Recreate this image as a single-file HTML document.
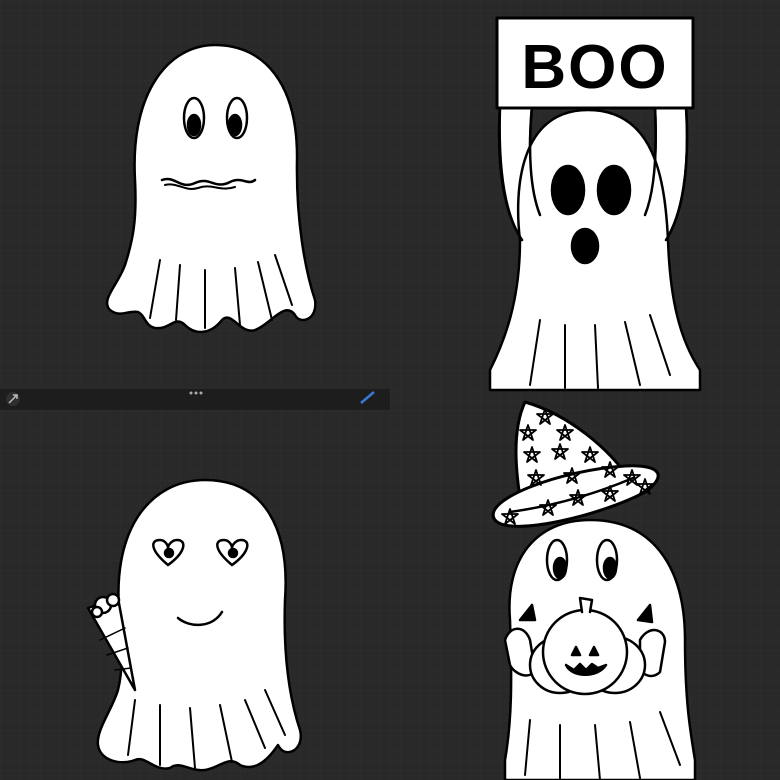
<!DOCTYPE html>
<html><head><meta charset="utf-8"><style>
html,body{margin:0;padding:0;background:#2a2a2a;}
svg{display:block}
</style></head><body>
<svg width="780" height="780" viewBox="0 0 780 780" xmlns="http://www.w3.org/2000/svg">
<defs>
<pattern id="g" width="10" height="10" patternUnits="userSpaceOnUse">
<path d="M10 0H0V10" fill="none" stroke="#303030" stroke-width="1"/>
</pattern>
<path id="s" d="M0 -8 L5 7 L-8 -3 L8 -3 L-5 7 Z"/>
</defs>
<rect width="780" height="780" fill="#292929"/>
<rect width="780" height="780" fill="url(#g)"/>

<!-- toolbar -->
<rect x="0" y="389" width="390" height="21" fill="#1d1d1d"/>
<circle cx="13" cy="399" r="7" fill="#2e2e2e"/>
<path d="M9 403 L17 395 M13 395 H17 V399" stroke="#bbb" stroke-width="1.5" fill="none"/>
<circle cx="191" cy="393" r="1.5" fill="#aaa"/><circle cx="196" cy="393" r="1.5" fill="#aaa"/><circle cx="201" cy="393" r="1.5" fill="#aaa"/>
<path d="M361 403 L374 392" stroke="#3a78d8" stroke-width="2.5"/>

<g stroke="#000" stroke-width="2.5" fill="#fff" stroke-linejoin="round" stroke-linecap="round">
<!-- Ghost 1 -->
<path d="M135 180 C130 90 170 45 215 45 C265 45 298 85 297 160 C296 220 305 270 315 300 C318 320 300 325 295 315 C285 300 270 325 255 330 C240 335 232 310 222 320 C210 335 195 335 185 325 C175 315 170 330 155 328 C145 326 145 315 138 312 C128 310 120 318 110 310 C100 300 118 285 125 265 C133 240 137 220 135 180 Z"/>
<path d="M160 260 L150 318 M180 265 L176 320 M205 270 L205 328 M235 268 L240 325 M258 262 L272 320 M275 255 L292 305" fill="none" stroke-width="2"/>
<ellipse cx="194" cy="118" rx="10" ry="20"/><ellipse cx="237" cy="118" rx="10" ry="20"/>
<ellipse cx="194" cy="125" rx="6" ry="10" fill="#000"/><ellipse cx="235" cy="125" rx="6" ry="10" fill="#000"/>
<path d="M162 180 C175 175 180 190 195 183 C210 176 215 190 230 182 C242 176 248 186 255 180" fill="none"/>
<path d="M165 185 C178 182 185 192 198 188 C212 183 220 192 235 187" fill="none" stroke-width="2"/>

<!-- Ghost 2 -->
<path d="M500 105 C496 170 505 215 522 240 L540 215 C530 190 528 150 532 105 Z"/>
<path d="M686 105 C690 170 682 215 666 240 L645 215 C655 190 657 150 655 105 Z"/>
<path d="M520 240 C515 200 515 110 588 110 C655 110 665 180 668 240 C670 300 680 340 700 370 L700 390 L490 390 L490 370 C505 340 520 300 520 240 Z"/>
<path d="M522 240 C505 215 498 170 500 108 M686 108 C690 170 682 215 666 240 M540 215 C530 190 528 150 532 108 M645 215 C655 190 657 150 655 108" fill="none"/>
<path d="M540 320 L530 385 M565 325 L565 388 M595 325 L598 388 M625 322 L640 385 M650 315 L670 375" fill="none" stroke-width="2"/>
<ellipse cx="568" cy="190" rx="16" ry="24" fill="#000"/><ellipse cx="614" cy="190" rx="16" ry="24" fill="#000"/>
<ellipse cx="585" cy="246" rx="13" ry="17" fill="#000"/>
<rect x="497" y="18" width="196" height="90" stroke-width="3"/>

<!-- Ghost 3 -->
<path d="M120 620 C110 530 150 480 205 480 C265 480 290 530 285 600 C283 660 290 700 300 730 C305 750 285 760 278 745 C268 760 255 772 240 765 C228 755 220 768 205 770 C190 772 180 760 170 768 C155 772 145 755 135 760 C120 766 100 760 98 745 C96 730 112 710 118 690 C123 670 122 650 120 620 Z"/>
<path d="M135 700 L128 755 M160 705 L160 765 M190 708 L195 768 M220 705 L232 762 M245 700 L265 748 M265 690 L285 735" fill="none" stroke-width="2"/>
<path d="M168 565 C150 550 150 540 160 540 C165 540 168 545 168 548 C168 545 172 540 177 540 C187 540 186 552 168 565 Z"/>
<path d="M232 565 C214 550 214 540 224 540 C229 540 232 545 232 548 C232 545 236 540 241 540 C251 540 250 552 232 565 Z"/>
<circle cx="169" cy="553" r="4" fill="#000"/><circle cx="233" cy="553" r="4" fill="#000"/>
<path d="M178 618 C190 628 212 628 222 612" fill="none"/>
<path d="M88 608 L135 690 L118 598 Z"/>
<circle cx="103" cy="605" r="8"/><circle cx="113" cy="600" r="6"/><circle cx="97" cy="612" r="5"/>
<path d="M100 640 L125 628 M107 655 L128 648 M115 670 L131 668" fill="none" stroke-width="1.5"/>

<!-- Ghost 4 -->
<path d="M510 620 C505 560 535 520 590 520 C655 520 685 570 685 640 C685 700 690 730 695 760 L695 780 L505 780 L505 760 C512 720 512 680 510 620 Z"/>
<path d="M530 720 L525 775 M560 725 L560 780 M595 725 L600 780 M630 722 L640 778 M660 712 L680 765" fill="none" stroke-width="2"/>
<ellipse cx="557" cy="560" rx="10" ry="20"/><ellipse cx="607" cy="560" rx="10" ry="20"/>
<ellipse cx="560" cy="568" rx="6" ry="10" fill="#000"/><ellipse cx="610" cy="568" rx="6" ry="10" fill="#000"/>
<path d="M520 620 L532 605 L535 620 Z" fill="#000"/>
<path d="M638 620 L650 605 L652 622 Z" fill="#000"/>
<path d="M505 640 C510 625 525 625 530 640 L535 670 C530 680 515 675 510 665 Z"/>
<path d="M640 640 C648 625 665 628 665 642 L660 672 C652 680 640 675 640 665 Z"/>
<ellipse cx="560" cy="665" rx="30" ry="28"/><ellipse cx="615" cy="665" rx="30" ry="28"/>
<circle cx="585" cy="652" r="42"/>
<path d="M582 612 L580 598 L592 600 L590 612" />
<path d="M572 655 l4 -8 l4 8 z M590 655 l4 -8 l4 8 z" fill="#000"/>
<path d="M566 665 C572 678 598 678 606 665 L598 668 L592 664 L586 670 L580 664 L574 670 Z" fill="#000"/>
<!-- hat -->
<path d="M525 402 C512 430 515 470 522 510 L630 480 C610 450 570 415 525 402 Z" stroke-width="3"/>
<path d="M495 520 C480 500 560 470 625 466 C665 464 665 478 645 492 C605 514 510 538 495 520 Z" stroke-width="3"/>
<path d="M510 512 C560 505 600 492 633 478" fill="none"/>
</g>
<g fill="none" stroke="#000" stroke-width="1.8" stroke-linejoin="round">
<use href="#s" x="545" y="417"/><use href="#s" x="528" y="433"/><use href="#s" x="565" y="433"/>
<use href="#s" x="532" y="455"/><use href="#s" x="560" y="452"/><use href="#s" x="590" y="455"/>
<use href="#s" x="536" y="478"/><use href="#s" x="572" y="476"/><use href="#s" x="610" y="470"/>
<use href="#s" x="632" y="478"/><use href="#s" x="510" y="517"/><use href="#s" x="548" y="508"/>
<use href="#s" x="578" y="498"/><use href="#s" x="645" y="487"/><use href="#s" x="610" y="494"/>
</g>
<text x="595" y="88" text-anchor="middle" font-family="Liberation Sans, sans-serif" font-size="62" font-weight="bold" fill="#000" letter-spacing="2">BOO</text>
</svg>
</body></html>
